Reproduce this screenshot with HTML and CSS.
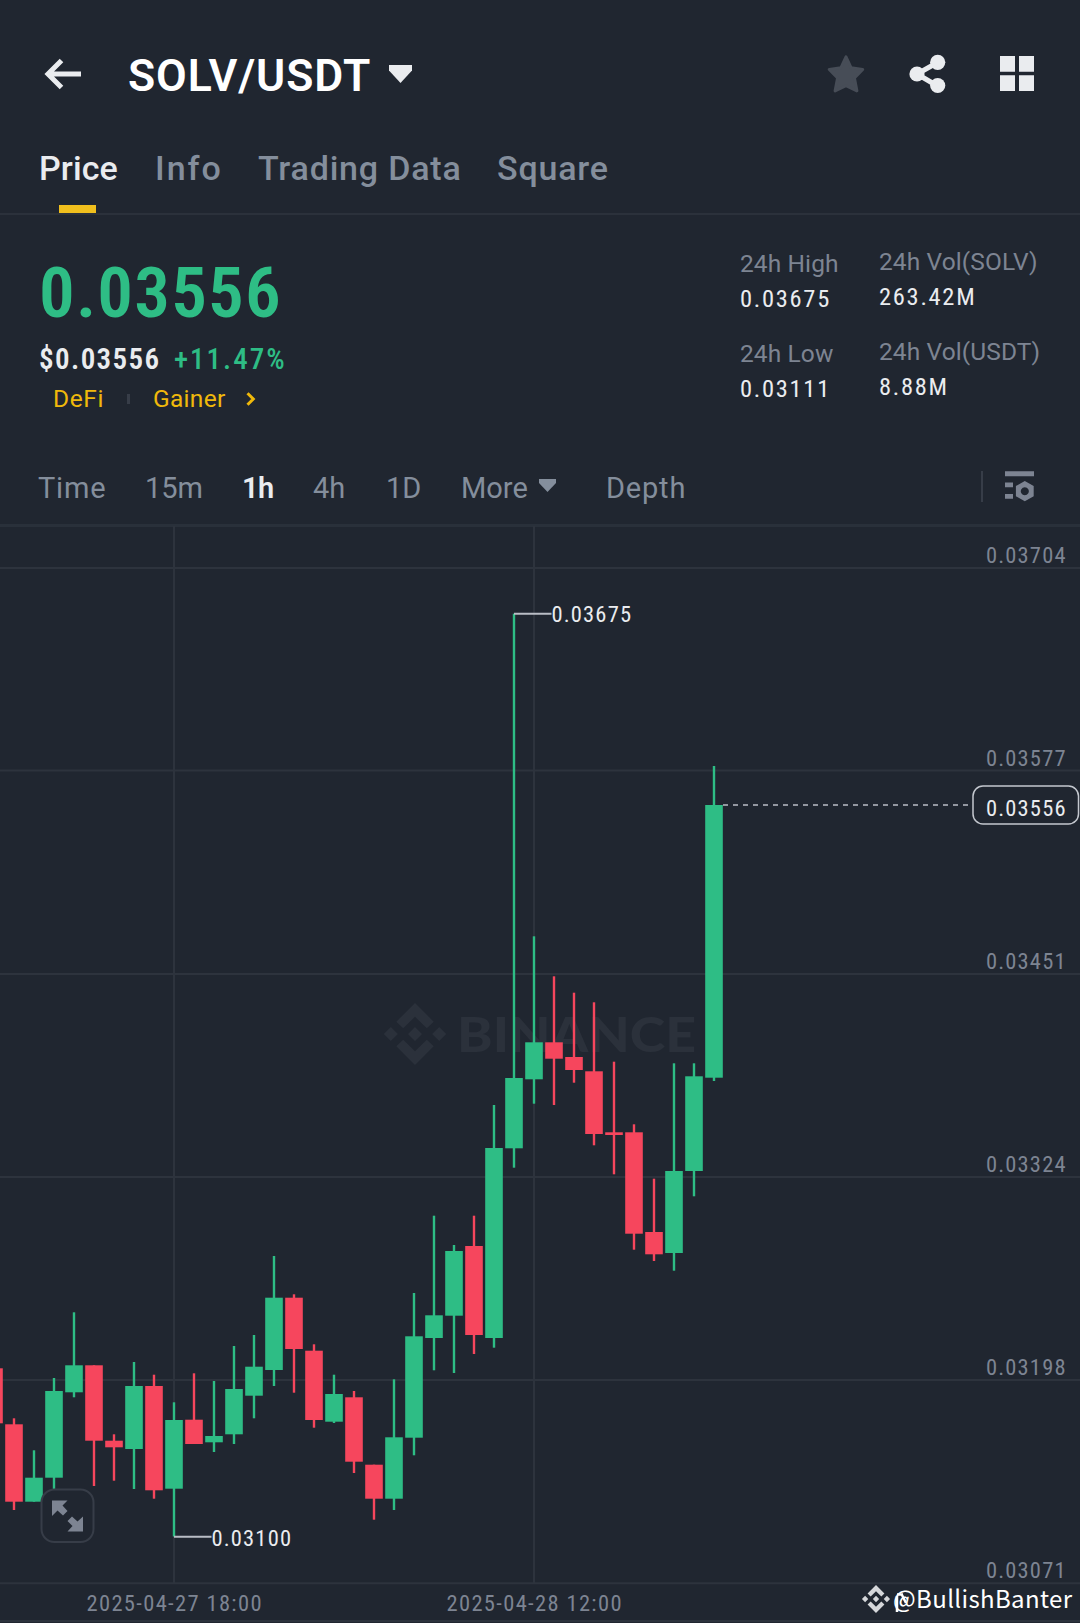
FILE: index.html
```html
<!DOCTYPE html>
<html lang="en">
<head>
<meta charset="utf-8">
<title>SOLV/USDT</title>
<link rel="stylesheet" href="styles.css">
</head>
<body>
<header class="topbar">
  <svg class="back" width="38" height="32" viewBox="0 0 38 32" fill="none" stroke="#eaecef" stroke-width="5"><path d="M37 16H4M17.500 2.500L4 16l13.500 13.500"/></svg>
  <h1 class="pair">SOLV/USDT</h1>
  <svg class="pair-caret" width="23" height="18" viewBox="0 0 23 18" fill="#eaecef"><path d="M0 0h23v5.500L11.500 18 0 5.500z"/></svg>
  <nav class="actions">
    <svg width="38" height="38" viewBox="0 0 38 38" fill="#474d57" stroke="#474d57" stroke-width="3" stroke-linejoin="round"><path d="M19 1.800l5 10.900 11.700 1.700-8.300 8.500 2.500 13L19 30.600 8.100 35.900l2.500-13L2.300 14.400 14 12.700z"/></svg>
    <svg width="37" height="40" viewBox="0 0 37 40" fill="#eaecef"><path d="M28.500 8.500L8 20l20.500 12" fill="none" stroke="#eaecef" stroke-width="5"/><circle cx="8" cy="20" r="7.600"/><circle cx="28.700" cy="8.300" r="7.600"/><circle cx="28.700" cy="31.500" r="7.600"/></svg>
    <svg width="34" height="35" viewBox="0 0 34 35" fill="#eaecef"><path d="M0 0h15v15.700H0zM19 0h15v15.700H19zM0 19.300h15V35H0zM19 19.300h15V35H19z"/></svg>
  </nav>
</header>

<nav class="tabs">
  <a class="tab tab-active">Price</a>
  <a class="tab tab-info">Info</a>
  <a class="tab">Trading Data</a>
  <a class="tab">Square</a>
</nav>

<section class="summary">
  <div class="quote">
    <div class="last">0.03556</div>
    <div class="fiat"><span class="usd">$0.03556</span><span class="change">+11.47%</span></div>
    <div class="tags">
      <span class="tag-defi">DeFi</span><i class="tag-sep"></i><span class="tag-gainer">Gainer</span>
      <svg width="10" height="14" viewBox="0 0 10 14" fill="none" stroke="#f0b90b" stroke-width="3"><path d="M1.500 1.200L7.300 7l-5.800 5.800"/></svg>
    </div>
  </div>
  <dl class="stats stats-range">
    <dt>24h High</dt><dd>0.03675</dd>
    <dt>24h Low</dt><dd>0.03111</dd>
  </dl>
  <dl class="stats stats-volume">
    <dt>24h Vol(SOLV)</dt><dd>263.42M</dd>
    <dt>24h Vol(USDT)</dt><dd>8.88M</dd>
  </dl>
</section>

<nav class="intervals">
  <a class="wide">Time</a><a>15m</a><a class="on">1h</a><a>4h</a><a>1D</a>
  <a>More<svg class="more-caret" width="17" height="13" viewBox="0 0 17 13" fill="#848e9c"><path d="M0 0h17v4L8.500 13 0 4z"/></svg></a>
  <a class="wide">Depth</a>
  <i class="divider"></i>
  <svg class="settings" width="29" height="31" viewBox="0 0 29 31" fill="#7d8492"><path d="M0 .3h29v5H0zM0 11.500h8v4.700H0zM0 23h8v4.700H0z"/><path fill-rule="evenodd" d="M19.800 10l8.900 5v10.300l-8.900 5-8.900-5V15zM19.800 16.200a4 4 0 1 0 .01 0z"/></svg>
</nav>

<main class="chart">
  <svg class="plot" width="1080" height="1099" viewBox="0 524 1080 1099">
    <g id="grid" class="grid">
      <path d="M0 568H1080M0 770.500H1080M0 974H1080M0 1177H1080M0 1380H1080M0 1583.300H1080M174 526V1583M534 526V1583"/>
      <path d="M0 1621H1080"/>
    </g>
    <g class="watermark">
      <g transform="translate(415 1034)"><use href="#mark"/></g>
      <text x="457" y="1051.500" textLength="239" lengthAdjust="spacingAndGlyphs">BINANCE</text>
    </g>
    <defs>
      <path id="mark" d="M0-31L18.700-12.300 11.800-5.700 0-17.300-11.800-5.700-18.700-12.300zM0 31L18.700 12.300 11.800 5.700 0 17.300-11.800 5.700-18.700 12.300zM0-7L7 0 0 7-7 0zM-24.200-7l7 7-7 7-7-7zM24.200-7l7 7-7 7-7-7z"/>
    </defs>
    <g id="candles"></g>
    <path class="leader" d="M514 613.700H551.500M174 1536.700H211.500"/>
    <path class="last-line" d="M723 805H971"/>
    <g class="scale">
      <text x="986" y="562.500" textLength="79.500">0.03704</text>
      <text x="986" y="765.500" textLength="79.500">0.03577</text>
      <text x="986" y="969" textLength="79.500">0.03451</text>
      <text x="986" y="1172" textLength="79.500">0.03324</text>
      <text x="986" y="1375" textLength="79.500">0.03198</text>
      <text x="986" y="1578" textLength="79.500">0.03071</text>
      <text x="86.500" y="1611" textLength="175">2025-04-27 18:00</text>
      <text x="446.500" y="1611" textLength="175">2025-04-28 12:00</text>
    </g>
    <rect class="tag-box" x="973" y="786" width="105.500" height="38" rx="10"/>
    <g class="marks">
      <text x="986" y="816.300" textLength="79.500">0.03556</text>
      <text x="551.500" y="622.300" textLength="79.500">0.03675</text>
      <text x="211.500" y="1546" textLength="79.500">0.03100</text>
    </g>
    <g class="expand">
      <rect x="41.500" y="1489.500" width="52" height="52.500" rx="13"/>
      <path d="M52 1500.500h15.500l-5 5 5 5.500-4.500 4.500-5.500-5-5.500 5.500zM83 1531.500H67.500l5-5.500-5-5 4.500-4.500 5.500 5 5.500-5z"/>
    </g>
    <g class="credit">
      <g transform="translate(876 1599) scale(.45)"><use href="#mark"/></g>
      <path class="stub" d="M897 1596v16M897 1594.500h6M902 1595l4 8"/>
      <text x="893" y="1608" textLength="179">@BullishBanter</text>
    </g>
  </svg>
</main>
<script src="chart.js"></script>
</body>
</html>
```
FILE: styles.css
```css
* { box-sizing: border-box; margin: 0; padding: 0; }
body {
  width: 1080px;
  height: 1623px;
  overflow: hidden;
  background: #202630;
  color: #eaecef;
  font-family: Roboto, "Liberation Sans", sans-serif;
  display: flex;
  flex-direction: column;
}
svg { display: block; flex: none; }

.topbar {
  height: 147px;
  padding-left: 44px;
  display: flex;
  align-items: center;
}
.back { margin-right: 46px; }
.pair {
  width: 261px;
  font-size: 44.5px;
  line-height: 56px;
  font-weight: 600;
  letter-spacing: .9px;
  color: #fff;
  padding-top: 4px;
}
.actions {
  display: flex;
  align-items: center;
  margin-left: auto;
  margin-right: 46px;
}
.actions svg:nth-child(2) { margin: 0 54px 0 44px; }

.tabs {
  height: 67.5px;
  padding-left: 39px;
  border-bottom: 2px solid #2b313b;
  display: grid;
  grid-template-columns: 116px 103px 239px 1fr;
  font-size: 34px;
  font-weight: 500;
  color: #848e9c;
}
.tab { line-height: 42px; letter-spacing: .8px; }
.tab-info { letter-spacing: 2px; }
.tab-active {
  letter-spacing: .1px;
  color: #eaecef;
  display: flex;
  flex-direction: column;
  justify-content: space-between;
}
.tab-active::after {
  content: "";
  width: 37px;
  height: 7.5px;
  margin-left: 20px;
  background: #f0bf1d;
}

.summary {
  height: 233px;
  padding-left: 39px;
  display: flex;
}
.quote { width: 701px; padding-top: 36px; }
.last {
  font-size: 71px;
  line-height: 83px;
  font-weight: 600;
  color: #2ebd85;
  font-stretch: 85%;
  letter-spacing: 1.2px;
}
.fiat {
  display: flex;
  font-size: 29px;
  line-height: 34px;
  margin-top: 8px;
}
.usd { width: 135px; font-weight: 600; font-stretch: 85%; letter-spacing: 1.4px; }
.change { color: #2ebd85; font-weight: 500; font-stretch: 85%; letter-spacing: 2px; }
.tags {
  display: flex;
  align-items: center;
  color: #f0b90b;
  font-size: 24.5px;
  line-height: 30px;
  margin-top: 8px;
  padding-left: 14px;
  letter-spacing: .3px;
}
.tag-sep { width: 3px; height: 10px; background: #373d48; }
.tag-defi { width: 74px; letter-spacing: .6px; }
.tag-gainer { margin-left: 23px; width: 93px; }
.stats { font-size: 24.5px; line-height: 30px; }
.stats dt { color: #7d8492; margin-bottom: 5px; letter-spacing: .1px; }
.stats dd { margin-bottom: 25px; font-stretch: 85%; letter-spacing: 1.7px; }
.stats-range { width: 139px; padding-top: 34px; }
.stats-volume { padding-top: 32px; }

.intervals {
  height: 79px;
  padding: 5px 0 0 38px;
  border-bottom: 3px solid #29303a;
  display: grid;
  grid-template-columns: 107px 97px 71px 73px 75px 145px 375px 24px 29px;
  align-items: center;
  font-size: 29px;
  line-height: 34px;
  color: #848e9c;
}
.intervals a { display: flex; align-items: center; }
.intervals .wide { letter-spacing: .8px; }
.intervals .on { color: #eaecef; font-weight: 600; letter-spacing: -.5px; }
.more-caret { margin: -6px 0 0 11px; }
.divider, .settings { margin-top: -3px; }
.divider { width: 2px; height: 31px; background: #373d48; }

.chart { margin-top: -3px; }
.plot text { font-size: 22.5px; font-stretch: 85%; }
.grid path { stroke: #2d333d; stroke-width: 2; fill: none; }
.watermark { fill: #2b313b; }
.plot .watermark text { font-family: Lato, sans-serif; font-weight: 900; font-size: 47px; }
.up { fill: #2ebd85; }
.down { fill: #f6465d; }
.leader { stroke: #b9bdc5; stroke-width: 2; }
.last-line { stroke: #b9bdc5; stroke-width: 1.5; stroke-dasharray: 5 5; }
.scale { fill: #7d8492; }
.marks { fill: #eaecef; }
.tag-box { fill: #202630; stroke: #c3c7ce; stroke-width: 1.5; }
.expand rect { fill: #202630; stroke: #373d48; stroke-width: 2; }
.expand path { fill: #7d8492; }
.credit { fill: #d5d7da; }
.credit .stub { stroke: #fff; stroke-width: 2.5; fill: none; }
.plot .credit text { font-family: "Noto Sans CJK SC", sans-serif; font-size: 24px; font-weight: 400; font-stretch: normal; fill: #fff; }
```
FILE: chart.js
```js
// One row per candle: [wick top, body top, body bottom, wick bottom, direction]
const candles = [
  [1368.3, 1368.3, 1423.3, 1423.3, "down"],
  [1418.3, 1424.3, 1501.7, 1510, "down"],
  [1450.3, 1477.7, 1501.7, 1501.7, "up"],
  [1378, 1391, 1477.7, 1490, "up"],
  [1312.3, 1365.3, 1392.3, 1397.3, "up"],
  [1365.3, 1365.3, 1440.7, 1486, "down"],
  [1434.3, 1440.7, 1447.3, 1480.7, "down"],
  [1362, 1386, 1449, 1489, "up"],
  [1374.7, 1386, 1490.3, 1498.7, "down"],
  [1402.3, 1420, 1488.7, 1536.5, "up"],
  [1373.3, 1419.7, 1444, 1444, "down"],
  [1381, 1436, 1442.3, 1452, "up"],
  [1346, 1389, 1434.3, 1444, "up"],
  [1335, 1366.7, 1395.7, 1418.3, "up"],
  [1256, 1297.7, 1370, 1386, "up"],
  [1294.3, 1297.7, 1349, 1392.7, "down"],
  [1344.3, 1350.7, 1420, 1427.7, "down"],
  [1374.7, 1394, 1421.7, 1423, "up"],
  [1391, 1397.3, 1461.7, 1473, "down"],
  [1464.7, 1464.7, 1498.7, 1519.7, "down"],
  [1379.3, 1437.3, 1498.7, 1510, "up"],
  [1293, 1336.3, 1437.7, 1455.3, "up"],
  [1215.7, 1315.3, 1338, 1370.3, "up"],
  [1245, 1251, 1315.7, 1373, "up"],
  [1215.7, 1246, 1335, 1354, "down"],
  [1105, 1148, 1338, 1347.7, "up"],
  [613.7, 1078, 1148.3, 1167.7, "up"],
  [936.3, 1042.3, 1079.3, 1103.7, "up"],
  [976.3, 1042.3, 1058.7, 1105, "down"],
  [992.7, 1057, 1070, 1082.7, "down"],
  [1002.3, 1071.3, 1134, 1145.3, "down"],
  [1061.7, 1132.3, 1135, 1174.3, "down"],
  [1124.3, 1132.3, 1233.7, 1249.7, "down"],
  [1178.7, 1232, 1254.3, 1261, "down"],
  [1063.3, 1171, 1253, 1270.7, "up"],
  [1063.3, 1076.3, 1171, 1196.3, "up"],
  [766, 805, 1077.7, 1081, "up"]
];

const layer = document.getElementById("candles");
const bar = (x, y, width, height, cls) => {
  const r = document.createElementNS("http://www.w3.org/2000/svg", "rect");
  Object.entries({ x, y, width, height, class: cls }).forEach(([k, v]) => r.setAttribute(k, v));
  layer.append(r);
};
candles.forEach(([hi, top, bottom, lo, cls], i) => {
  const cx = -6 + i * 20;
  bar(cx - 1.2, hi, 2.4, lo - hi, cls);
  bar(cx - 8.8, top, 17.6, bottom - top, cls);
});
```
